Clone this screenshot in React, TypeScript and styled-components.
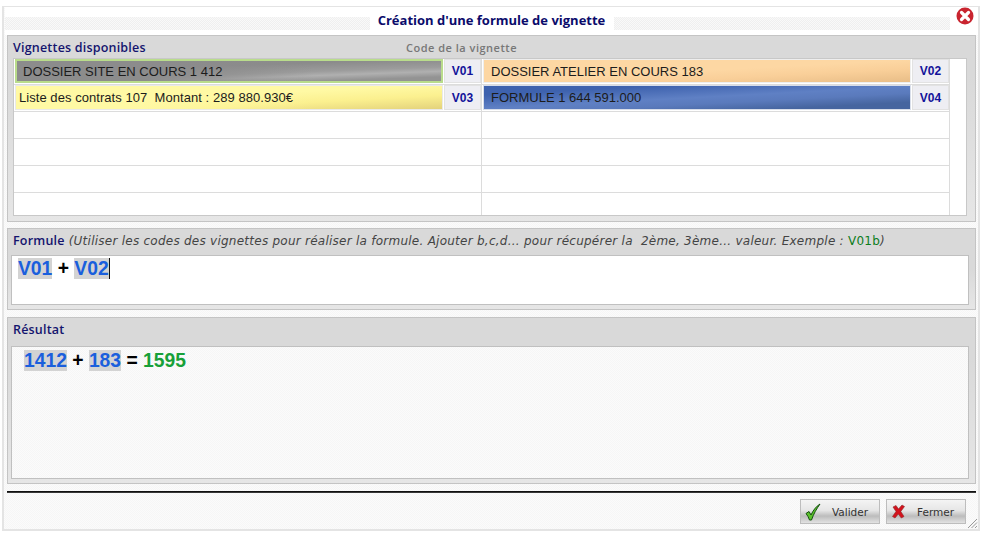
import { FC } from "react";
import styled, { createGlobalStyle } from "styled-components";

const GlobalStyle = createGlobalStyle`
  html, body {
    margin: 0;
    padding: 0;
    background: #fff;
    font-family: "Liberation Sans", Arial, sans-serif;
  }
  * { box-sizing: border-box; }
`;

const dither = (a: string, b: string) =>
  `repeating-conic-gradient(${a} 0 25%, ${b} 0 50%) 0 0 / 2px 2px`;

const Dialog = styled.div`
  width: 978px;
  height: 525px;
  margin: 6px 0 0 2px;
  border: 2px solid #e4e4e4;
  border-top-width: 1px;
  padding: 0 2px 0 3px;
  background: ${dither("#f6f6f6", "#fbfbfb")};
  position: relative;
  display: flex;
  flex-direction: column;
`;

const TitleBar = styled.div`
  height: 28px;
  flex: none;
  display: flex;
  align-items: center;
  justify-content: center;
  position: relative;
  margin: 0 -2px;
  background:
    linear-gradient(#fff, #fff) 0 0 / 100% 10px no-repeat,
    linear-gradient(#fff, #fff) 0 100% / 100% 5px no-repeat,
    linear-gradient(#fff, #fff) 100% 0 / 28px 100% no-repeat,
    ${dither("#efefef", "#f9f9f9")};
`;

const Title = styled.h1`
  margin: 0 0 3px;
  background: #fff;
  font: bold 13px "Open Sans", Tahoma, sans-serif;
  color: #0b0b6b;
  width: 244px;
  text-align: center;
  height: 22px;
  line-height: 23px;
`;

const CloseIcon = styled.svg`
  position: absolute;
  right: 4px;
  top: 0;
  width: 18px;
  height: 18px;
`;

const Panel = styled.section<{ $h: number; $pad: number; $gap: number }>`
  height: ${(p) => p.$h}px;
  flex: none;
  margin-bottom: ${(p) => p.$gap}px;
  padding: 0 ${(p) => p.$pad + 3}px 5px ${(p) => p.$pad}px;
  border: 1px solid #c4c4c4;
  background: linear-gradient(#d9d9d9, #d9d9d9 40px, #e6e6e6);
  display: flex;
  flex-direction: column;
`;

const PanelHead = styled.div<{ $h: number; $inset: number; $lift: number }>`
  height: ${(p) => p.$h}px;
  flex: none;
  display: flex;
  align-items: center;
  position: relative;
  white-space: pre;
  padding-left: ${(p) => p.$inset}px;
  padding-bottom: ${(p) => p.$lift}px;
`;

const PanelTitle = styled.span`
  font: 600 12.5px "Open Sans", Tahoma, sans-serif;
  letter-spacing: 0.2px;
  color: #14146e;
`;

const CodeHead = styled.span`
  position: absolute;
  left: 393px;
  top: 4px;
  font: 600 11px "Open Sans", Tahoma, sans-serif;
  letter-spacing: 0.5px;
  color: #777;
`;

const Hint = styled.span`
  margin-left: 4px;
  font: italic 12px "DejaVu Sans", Verdana, sans-serif;
  letter-spacing: 0.25px;
  color: #444;
`;

const HintCode = styled.span`
  font-style: normal;
  color: #0c7d1c;
`;

const VignetteTable = styled.div`
  flex: 1;
  display: grid;
  grid-template-columns: 468px 468px 1fr;
  grid-template-rows: 26px 27px 27px 27px 27px 1fr;
  border: 1px solid #c8c8c8;
  background: #fff;
`;

const Cell = styled.div<{ $last: boolean }>`
  display: flex;
  padding: 0 0 1px 1px;
  border-right: 1px solid #dcdcdc;
  border-bottom: ${(p) => (p.$last ? 0 : 1)}px solid #dcdcdc;
  gap: 1px;
`;

const Gutter = styled.div`
  grid-column: 3;
  grid-row: 1 / span 6;
`;

const tones = {
  grey: {
    bg: "linear-gradient(90deg, #8c8c8c 0 30%, transparent 70%), linear-gradient(178deg, #8b8b8b 0 35%, #9c9c9c 60%, #b0b0b0 72%, #939393 88%)",
    border: "#b9dc8c",
    pad: 6,
  },
  yellow: {
    bg: "linear-gradient(90deg, #fff9a4 0 25%, transparent 70%), linear-gradient(177deg, #fff9a4 0 45%, #fbf08f 70%, #e3d27c 100%)",
    border: "#e9e9e9",
    pad: 3,
  },
  orange: {
    bg: "linear-gradient(177deg, #fdd7a3 0 50%, #f9cf99 70%, #e8bd87 100%)",
    border: "#eeeeee",
    pad: 7,
  },
  blue: {
    bg: "linear-gradient(177deg, #3e62ae 0 20%, #5f80c4 50%, #5a7abc 65%, #46659f 85%)",
    border: "#d8deea",
    pad: 7,
  },
};

const Vignette = styled.div<{ $tone: keyof typeof tones }>`
  flex: 1;
  min-width: 0;
  display: flex;
  align-items: center;
  padding-left: ${(p) => tones[p.$tone].pad}px;
  border: ${(p) => (p.$tone === "grey" ? 2 : 1)}px solid ${(p) => tones[p.$tone].border};
  background: ${(p) => tones[p.$tone].bg};
  font-size: 13px;
  letter-spacing: ${(p) => (p.$tone === "yellow" ? 0.05 : 0)}px;
  white-space: pre;
  color: #1c1c1c;
`;

const Code = styled.div`
  width: 37px;
  flex: none;
  display: flex;
  align-items: center;
  justify-content: center;
  background: #eeeef3;
  border: 1px solid #e2e2e2;
  font-size: 12px;
  font-weight: bold;
  color: #13139a;
`;

const Editor = styled.div<{ $h: number; $soft?: boolean }>`
  height: ${(p) => p.$h}px;
  flex: none;
  border: 1px solid #c0c0c0;
  background: ${(p) => (p.$soft ? dither("#f6f6f6", "#fbfbfb") : "#fff")};
  padding: ${(p) => (p.$soft ? "2px 0 0 12px" : "1px 0 0 6px")};
  font-size: 19.3px;
  font-weight: bold;
  line-height: 23px;
  white-space: pre;
  color: #000;
`;

const Token = styled.span<{ $caret?: boolean }>`
  background: #d3d3d3;
  color: #1a5fdd;
  ${(p) => p.$caret && "box-shadow: 1px 0 0 #111;"}
`;

const Total = styled.span`
  color: #17a038;
`;

const Rule = styled.hr`
  flex: none;
  margin: 0 0 6px;
  height: 2px;
  border: 0;
  background: linear-gradient(#111 60%, #777);
`;

const Footer = styled.div`
  display: flex;
  justify-content: flex-end;
  gap: 6px;
  padding-right: 10px;
`;

const Button = styled.button`
  width: 80px;
  height: 25px;
  padding: 0 0 0 4px;
  display: flex;
  align-items: center;
  border: 1px solid #bdbdbd;
  background: linear-gradient(#f4f4f4, #e6e6e6 45%, #bcbcbc 70%, #e2e2e2);
  font: 10.5px "DejaVu Sans", Verdana, sans-serif;
  color: #333;
`;

const ButtonLabel = styled.span`
  flex: 1;
  text-align: center;
`;

const Grip = styled.svg`
  position: absolute;
  right: 0;
  bottom: 0;
  width: 11px;
  height: 11px;
`;

const CheckIcon = () => (
  <svg width="16" height="18" viewBox="0 0 16 18">
    <path
      d="M1 10.5 L4 8.5 L6 12 C8 7.5 11 3.5 15 1 C11.5 6 8.5 11 6.5 17 L4.5 17 C3.8 14.5 2.5 12.5 1 10.5 Z"
      fill="#5cc12c"
      stroke="#14500f"
      strokeWidth="1"
      strokeLinejoin="round"
    />
  </svg>
);

const CrossIcon = () => (
  <svg width="15" height="15" viewBox="0 0 15 15">
    <path
      d="M2 3 L5 1.5 L7.5 5 L11 1 L13.5 2.5 L9.8 7.5 L13 12.5 L10.3 14 L7.3 10 L4 14 L1.5 12.5 L5 7.5 Z"
      fill="#d3121c"
      stroke="#8c2a2a"
      strokeWidth="0.6"
    />
  </svg>
);

type Item = [keyof typeof tones, string, string];

const rows: { left?: Item; right?: Item }[] = [
  { left: ["grey", "DOSSIER SITE EN COURS 1 412", "V01"], right: ["orange", "DOSSIER ATELIER EN COURS 183", "V02"] },
  { left: ["yellow", "Liste des contrats 107  Montant : 289 880.930€", "V03"], right: ["blue", "FORMULE 1 644 591.000", "V04"] },
  {},
  {},
  {},
  {},
];

const Slot: FC<{ data?: Item; last: boolean }> = ({ data, last }) => (
  <Cell $last={last}>
    {data && (
      <>
        <Vignette $tone={data[0]}>{data[1]}</Vignette>
        <Code>{data[2]}</Code>
      </>
    )}
  </Cell>
);

export default function App() {
  return (
    <>
      <GlobalStyle />
      <Dialog>
        <TitleBar>
          <Title>Création d'une formule de vignette</Title>
          <CloseIcon viewBox="0 0 18 18">
            <circle cx="9" cy="9" r="8.5" fill="#c9242f" />
            <path d="M5.5 5.5 L12.5 12.5 M12.5 5.5 L5.5 12.5" stroke="#fff" strokeWidth="3.2" strokeLinecap="round" />
          </CloseIcon>
        </TitleBar>

        <Panel $h={187} $pad={5} $gap={6}>
          <PanelHead $h={22} $inset={0} $lift={0}>
            <PanelTitle>Vignettes disponibles</PanelTitle>
            <CodeHead>Code de la vignette</CodeHead>
          </PanelHead>
          <VignetteTable>
            <Gutter />
            {rows.flatMap((row, i) => [
              <Slot key={`l${i}`} data={row.left} last={i === rows.length - 1} />,
              <Slot key={`r${i}`} data={row.right} last={i === rows.length - 1} />,
            ])}
          </VignetteTable>
        </Panel>

        <Panel $h={82} $pad={3} $gap={7}>
          <PanelHead $h={26} $inset={2} $lift={3}>
            <PanelTitle>Formule</PanelTitle>
            <Hint>
              (Utiliser les codes des vignettes pour réaliser la formule. Ajouter b,c,d... pour récupérer la  2ème, 3ème... valeur. Exemple : <HintCode>V01b</HintCode>)
            </Hint>
          </PanelHead>
          <Editor $h={50}>
            <Token>V01</Token> + <Token $caret>V02</Token>
          </Editor>
        </Panel>

        <Panel $h={167} $pad={3} $gap={7}>
          <PanelHead $h={28} $inset={2} $lift={5}>
            <PanelTitle>Résultat</PanelTitle>
          </PanelHead>
          <Editor $h={133} $soft>
            <Token>1412</Token> + <Token>183</Token> = <Total>1595</Total>
          </Editor>
        </Panel>

        <Rule />

        <Footer>
          <Button>
            <CheckIcon />
            <ButtonLabel>Valider</ButtonLabel>
          </Button>
          <Button>
            <CrossIcon />
            <ButtonLabel>Fermer</ButtonLabel>
          </Button>
        </Footer>

        <Grip viewBox="0 0 11 11">
          <path d="M10 1 L1 10 M10 4.5 L4.5 10 M10 8 L8 10" stroke="#9a9a9a" strokeWidth="1" />
        </Grip>
      </Dialog>
    </>
  );
}
